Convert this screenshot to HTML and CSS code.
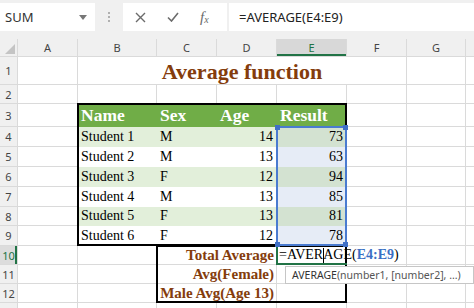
FILE: index.html
```html
<!DOCTYPE html>
<html>
<head>
<meta charset="utf-8">
<title>Average function</title>
<link rel="stylesheet" href="styles.css">
</head>
<body>
<div class="toolbar">
  <div class="namebox">
    <span>SUM</span>
    <svg class="dd" width="8" height="5" viewBox="0 0 8 5"><path d="M0 0h8L4 5z" fill="#777"/></svg>
  </div>
  <div class="grip"><i></i><i></i><i></i></div>
  <div class="fbtns">
    <svg width="11" height="11" viewBox="0 0 11 11"><path d="M1 1l9 9M10 1l-9 9" stroke="#6b6b6b" stroke-width="1.4" fill="none"/></svg>
    <svg width="12" height="10" viewBox="0 0 12 10"><path d="M1 5.5l3.5 3.5L11 1" stroke="#6b6b6b" stroke-width="1.6" fill="none"/></svg>
    <span class="fx">f<sub>x</sub></span>
  </div>
  <div class="finput">=AVERAGE(E4:E9)</div>
</div>

<div class="sheet">
  <div class="grid">
    <div class="corner"><span class="tri"></span></div>
    <div class="ch">A</div><div class="ch">B</div><div class="ch">C</div><div class="ch">D</div><div class="ch sel">E</div><div class="ch">F</div><div class="ch">G</div><div class="ch"></div>

    <div class="rh">1</div><div></div><div class="title">Average function</div><div></div><div></div>

    <div class="rh">2</div><div></div><div></div><div></div><div></div><div></div><div></div><div></div><div></div>

    <div class="rh">3</div><div></div>
    <div class="t h th">Name</div><div class="t h th">Sex</div><div class="t h th">Age</div><div class="t h th">Result</div>
    <div></div><div></div><div></div>

    <div class="rh">4</div><div></div>
    <div class="t g">Student 1</div><div class="t g">M</div><div class="t g num">14</div><div class="t eg num">73</div>
    <div></div><div></div><div></div>

    <div class="rh">5</div><div></div>
    <div class="t w">Student 2</div><div class="t w">M</div><div class="t w num">13</div><div class="t ew num">63</div>
    <div></div><div></div><div></div>

    <div class="rh">6</div><div></div>
    <div class="t g">Student 3</div><div class="t g">F</div><div class="t g num">12</div><div class="t eg num">94</div>
    <div></div><div></div><div></div>

    <div class="rh">7</div><div></div>
    <div class="t w">Student 4</div><div class="t w">M</div><div class="t w num">13</div><div class="t ew num">85</div>
    <div></div><div></div><div></div>

    <div class="rh">8</div><div></div>
    <div class="t g">Student 5</div><div class="t g">F</div><div class="t g num">13</div><div class="t eg num">81</div>
    <div></div><div></div><div></div>

    <div class="rh">9</div><div></div>
    <div class="t w">Student 6</div><div class="t w">F</div><div class="t w num">12</div><div class="t ew num">78</div>
    <div></div><div></div><div></div>

    <div class="rh act">10</div><div></div><div></div>
    <div class="label">Total Average</div>
    <div class="editor">=AVER<span class="caret"></span>AGE(<b>E4:E9</b>)</div>
    <div></div><div></div>

    <div class="rh">11</div><div></div><div></div>
    <div class="label">Avg(Female)</div>
    <div></div><div></div><div></div><div></div>

    <div class="rh">12</div><div></div><div></div>
    <div class="label">Male Avg(Age 13)</div>
    <div></div><div></div><div></div><div></div>

    <div class="rh"></div><div></div><div></div><div></div><div></div><div></div><div></div><div></div><div></div>
  </div>

  <div class="overlay">
    <div class="tblbox"></div>
    <div class="sumbox"></div>
    <div class="active"></div>
    <div class="range"><i class="hd tl"></i><i class="hd tr"></i><i class="hd bl"></i><i class="hd br"></i></div>
    <div class="tip"><span class="fn">AVERAGE</span>(number1, [number2], ...)</div>
  </div>
</div>
</body>
</html>
```

FILE: styles.css
```css
* { box-sizing: border-box; margin: 0; padding: 0; }

body {
  margin: 0;
  width: 474px;
  height: 308px;
  overflow: hidden;
  background: #fff;
  font-family: "Liberation Serif", "Times New Roman", serif;
}

/* ---------- formula bar ---------- */
.toolbar {
  height: 39px;
  background: #f0f0f0;
  display: flex;
  align-items: flex-start;
  padding-top: 3px;
}

.namebox {
  width: 95px;
  height: 28px;
  background: #fff;
  display: flex;
  align-items: center;
  justify-content: space-between;
  padding: 0 8px 0 5px;
  font: 13px "Noto Sans", sans-serif;
  color: #333;
}

.grip {
  width: 28px;
  height: 28px;
  display: flex;
  flex-direction: column;
  align-items: center;
  justify-content: center;
  gap: 2px;
}
.grip i {
  display: block;
  width: 2px;
  height: 2px;
  background: #b0b0b0;
}

.fbtns {
  width: 104px;
  height: 28px;
  background: #fff;
  display: flex;
  align-items: center;
  padding-left: 12px;
  gap: 21px;
}

.fx {
  font: italic 15px "Liberation Serif", serif;
  color: #6b6b6b;
}
.fx sub {
  font-size: 10px;
  vertical-align: -1px;
}

.finput {
  flex: 1;
  height: 28px;
  background: #fff;
  margin-left: 2px;
  padding-left: 10px;
  display: flex;
  align-items: center;
  font: 13px "Noto Sans", sans-serif;
  color: #222;
}

/* ---------- sheet ---------- */
.sheet {
  position: relative;
  height: 269px;
}

.grid,
.overlay {
  display: grid;
  grid-template-columns: 17px 59px 78px 59px 59px 69px 59px 58px 1fr;
  grid-template-rows: 17px 27px 18px 22px 19px 19px 19px 19px 18px 19px 18px 18px 18px 1fr;
  gap: 1px;
  height: 269px;
}

.grid { background: #dadada; }

.grid > div {
  background: #fff;
  white-space: nowrap;
  display: flex;
  align-items: center;
  font-size: 14px;
  color: #000;
}

.overlay {
  position: absolute;
  inset: 0;
  pointer-events: none;
}

/* headers */
.grid > .ch,
.grid > .rh,
.grid > .corner {
  background: #f0f0f0;
  font: 11px "Noto Sans", sans-serif;
  color: #444;
  justify-content: center;
}
.grid > .ch.sel {
  background: #d8d8d8;
  box-shadow: inset 0 -2px 0 #217346;
  color: #217346;
}
.grid > .rh.act {
  background: #dcdcdc;
  box-shadow: inset -2px 0 0 #217346;
  color: #217346;
}
.corner { position: relative; }
.tri {
  position: absolute;
  right: 2px;
  bottom: 2px;
  width: 0;
  height: 0;
  border-left: 10px solid transparent;
  border-bottom: 10px solid #c4c4c4;
}

/* title */
.grid > .title {
  grid-column: span 5;
  justify-content: center;
  font-size: 22px;
  font-weight: bold;
  color: #843c0c;
  padding-top: 2px;
}

/* table */
.t {
  background: var(--c) !important;
  box-shadow: 1px 0 0 var(--c), 0 1px 0 var(--c), 1px 1px 0 var(--c);
  padding: 0 3px;
}
.h  { --c: #70ad47; }
.g  { --c: #e2efda; }
.w  { --c: #ffffff; }
.eg { --c: #d3e2d1; }
.ew { --c: #e6ecf6; }

.grid > .th {
  color: #fff;
  font-weight: bold;
  font-size: 17.5px;
  padding-top: 1px;
}
.grid > .num { justify-content: flex-end; }

/* summary */
.grid > .label {
  grid-column: span 2;
  justify-content: flex-end;
  padding-right: 2px;
  font-size: 15px;
  font-weight: bold;
  color: #843c0c;
}

.grid > .editor {
  grid-column: span 2;
  padding-left: 2px;
  font-size: 14px;
}
.editor b { color: #3a6fc4; }
.caret {
  display: inline-block;
  width: 0;
  height: 15px;
  border-left: 1px solid #000;
  margin-right: -1px;
}

/* overlays */
.tblbox {
  grid-row: 4 / 11;
  grid-column: 3 / 7;
  margin: -1px;
  border: 2px solid #000;
}
.sumbox {
  grid-row: 11 / 14;
  grid-column: 4 / 7;
  margin: -1px;
  border: 2px solid #000;
}
.active {
  grid-row: 11 / 12;
  grid-column: 6 / 7;
  margin: -1px;
  border-left: 2px solid #217346;
  border-bottom: 2px solid #217346;
}
.range {
  position: relative;
  grid-row: 5 / 11;
  grid-column: 6 / 7;
  margin: -1px;
  border: 2px solid #4a7bd0;
}
.hd {
  position: absolute;
  width: 5px;
  height: 5px;
  background: #3f6fc6;
}
.hd.tl { left: -3px; top: -3px; }
.hd.tr { right: -3px; top: -3px; }
.hd.bl { left: -3px; bottom: -3px; }
.hd.br { right: -3px; bottom: -3px; }

.tip {
  grid-row: 12 / 13;
  grid-column: 6 / 10;
  margin-left: 8px;
  margin-top: 1px;
  height: 18px;
  background: #fff;
  border: 1px solid #c6c6c6;
  display: flex;
  align-items: center;
  padding-left: 6px;
  font: 10.5px "Noto Sans", sans-serif;
  color: #555;
  white-space: nowrap;
  overflow: hidden;
}
.tip .fn { color: #333; }
```
